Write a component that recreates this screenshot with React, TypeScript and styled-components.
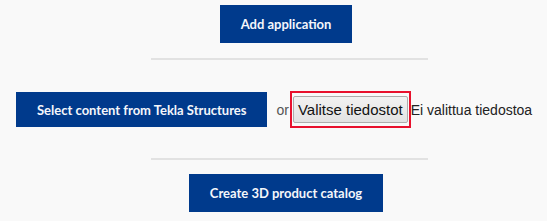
import styled, { createGlobalStyle } from 'styled-components';

const GlobalStyle = createGlobalStyle`
    html, body {
        margin: 0;
        padding: 0;
        background: #f9f9f9;
        overflow: hidden;
    }
`

const Page = styled.div`
    display: flex;
    flex-direction: column;
    width: 540px;
    padding: 5px 0 0 16px;
`

const Centered = styled.div`
    display: flex;
    justify-content: center;
`

const BlueButton = styled.button<{ $height?: number }>`
    background: #003a8c;
    border: none;
    border-radius: 0;
    color: #f4f6fb;
    cursor: pointer;
    font-family: Lato, sans-serif;
    font-size: 13px;
    font-weight: 700;
    height: ${props => props.$height ? props.$height : 38}px;
    padding: 0 21px;
    white-space: nowrap;
`

const Divider = styled.div<{ $top: number; $bottom: number }>`
    border-top: 2px solid #e2e2e2;
    margin: ${props => props.$top}px 0 ${props => props.$bottom}px 135px;
    width: 277px;
`

const UploadRow = styled.div`
    display: flex;
    align-items: center;
`

const OrText = styled.span`
    color: #555555;
    font-family: "Liberation Sans", Arial, sans-serif;
    font-size: 14px;
    margin: 0 1px 0 9px;
`

const Highlight = styled.div`
    border: 2px solid #e8112d;
    display: flex;
    align-items: center;
    padding: 3px 1px;
`

const FileButton = styled.button`
    background: linear-gradient(#f2f2f2, #e2e2e2);
    border: 1px solid #adadad;
    border-radius: 2px;
    color: #111111;
    font-family: "Liberation Sans", Arial, sans-serif;
    font-size: 15px;
    height: 27px;
    padding: 0 4px;
`

const FileStatus = styled.span`
    color: #222222;
    font-family: "Liberation Sans", Arial, sans-serif;
    font-size: 14px;
`

const App = () => {
    return (
        <>
            <GlobalStyle />
            <Page>
                <Centered>
                    <BlueButton>Add application</BlueButton>
                </Centered>
                <Divider $top={15} $bottom={31} />
                <UploadRow>
                    <BlueButton $height={35}>Select content from Tekla Structures</BlueButton>
                    <OrText>or</OrText>
                    <Highlight>
                        <FileButton>Valitse tiedostot</FileButton>
                    </Highlight>
                    <FileStatus>Ei valittua tiedostoa</FileStatus>
                </UploadRow>
                <Divider $top={30} $bottom={14} />
                <Centered>
                    <BlueButton>Create 3D product catalog</BlueButton>
                </Centered>
            </Page>
        </>
    )
}

export default App;
